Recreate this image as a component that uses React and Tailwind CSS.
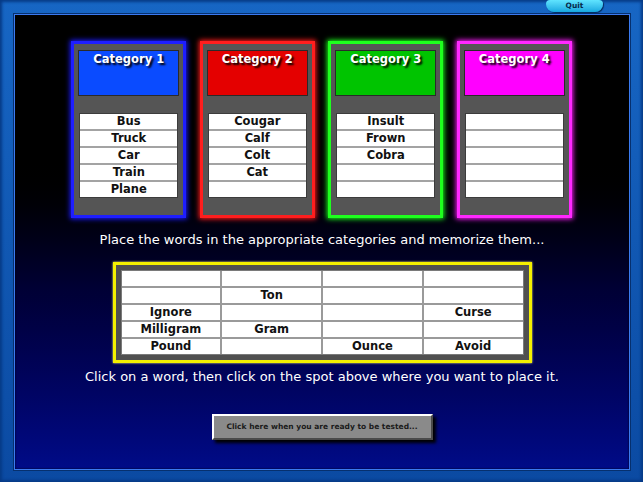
import React from 'react';

const categories = [
  {
    title: 'Category 1',
    frame: 'border-[#1e1eff] shadow-[0_0_5px_1px_#1a1aff]',
    fill: 'bg-[#0a4bff]',
    words: ['Bus', 'Truck', 'Car', 'Train', 'Plane'],
  },
  {
    title: 'Category 2',
    frame: 'border-[#ff1e1e] shadow-[0_0_5px_1px_#ff1a1a]',
    fill: 'bg-[#e40000]',
    words: ['Cougar', 'Calf', 'Colt', 'Cat', ''],
  },
  {
    title: 'Category 3',
    frame: 'border-[#1eff1e] shadow-[0_0_5px_1px_#1aff1a]',
    fill: 'bg-[#00c400]',
    words: ['Insult', 'Frown', 'Cobra', '', ''],
  },
  {
    title: 'Category 4',
    frame: 'border-[#ff28ff] shadow-[0_0_5px_1px_#ff1aff]',
    fill: 'bg-[#ff00ff]',
    words: ['', '', '', '', ''],
  },
];

// words still waiting to be dropped into a category
const pool = [
  ['', '', '', ''],
  ['', 'Ton', '', ''],
  ['Ignore', '', '', 'Curse'],
  ['Milligram', 'Gram', '', ''],
  ['Pound', '', 'Ounce', 'Avoid'],
];

const CategoryCard = ({ cat }) => (
  <div className={`w-[115px] h-[177px] border-[3px] ${cat.frame} bg-[#555555] px-[4px] pt-[6px] flex flex-col`}>
    <div className={`h-[46px] ${cat.fill} border border-[#2a2a2a] flex justify-center pt-[1px]`}>
      <span className="text-white font-bold text-[11.5px] leading-[14px] [text-shadow:2px_2px_2px_#000]">
        {cat.title}
      </span>
    </div>
    <div className="mt-[17px] mx-[1px] flex flex-col gap-[2px] bg-[#a3a3a3] border border-[#3c3c3c]">
      {cat.words.map((w, i) => (
        <div key={i} className="h-[15px] bg-white flex items-center justify-center text-[11.5px] font-bold text-[#111] leading-none">
          {w}
        </div>
      ))}
    </div>
  </div>
);

export default function App() {
  return (
    <div className="relative w-[643px] h-[482px] bg-linear-to-b from-[#1766c4] to-[#0b4aa2] pt-[14px] pl-[14px] pr-[13px] pb-[12px] font-['DejaVu_Sans',sans-serif] shadow-[inset_0_0_3px_2px_#063a86] overflow-hidden">
      {/* quit pill sitting in the top frame */}
      <button className="absolute left-[546px] top-0 w-[57px] h-[12px] rounded-b-[8px] rounded-t-[4px] bg-linear-to-b from-[#5fe4ff] to-[#12a8e0] shadow-[1px_1px_1px_#032a5c] flex items-center justify-center">
        <span className="text-[7.5px] font-bold text-[#062a4a] leading-none">Quit</span>
      </button>

      <div className="w-full h-full border border-[#3a7af0] shadow-[0_0_0_1px_#06306e,inset_0_0_2px_#000] bg-linear-to-b from-black from-30% via-[#000034] via-60% to-[#000b88] flex flex-col items-center pt-[26px]">
        <div className="flex gap-[13.5px] -ml-[1px]">
          {categories.map((c) => (
            <CategoryCard key={c.title} cat={c} />
          ))}
        </div>

        <p className="mt-[14px] text-white text-[13px] leading-[16px]">
          Place the words in the appropriate categories and memorize them...
        </p>

        <div className="mt-[14px] w-[419px] border-[3px] border-[#f4f000] shadow-[0_0_2px_#fffb80] bg-[#505050] p-[5px]">
          <div className="grid grid-cols-4 gap-[2px] bg-[#9a9a9a] border border-[#7a7a7a]">
            {pool.flat().map((w, i) => (
              <div key={i} className="h-[15px] bg-white flex items-center justify-center text-[11.5px] font-bold text-[#111] leading-none">
                {w}
              </div>
            ))}
          </div>
        </div>

        <p className="mt-[6px] text-white text-[13px] leading-[16px]">
          Click on a word, then click on the spot above where you want to place it.
        </p>

        <button className="mt-[29px] w-[221px] h-[26px] bg-[#8a8a8a] border-2 border-t-white border-l-white border-b-[#4a4a4a] border-r-[#4a4a4a] shadow-[3px_3px_3px_#000] flex items-center justify-center">
          <span className="text-[7.5px] font-bold text-[#1a1a1a] leading-none">
            Click here when you are ready to be tested...
          </span>
        </button>
      </div>
    </div>
  );
}
